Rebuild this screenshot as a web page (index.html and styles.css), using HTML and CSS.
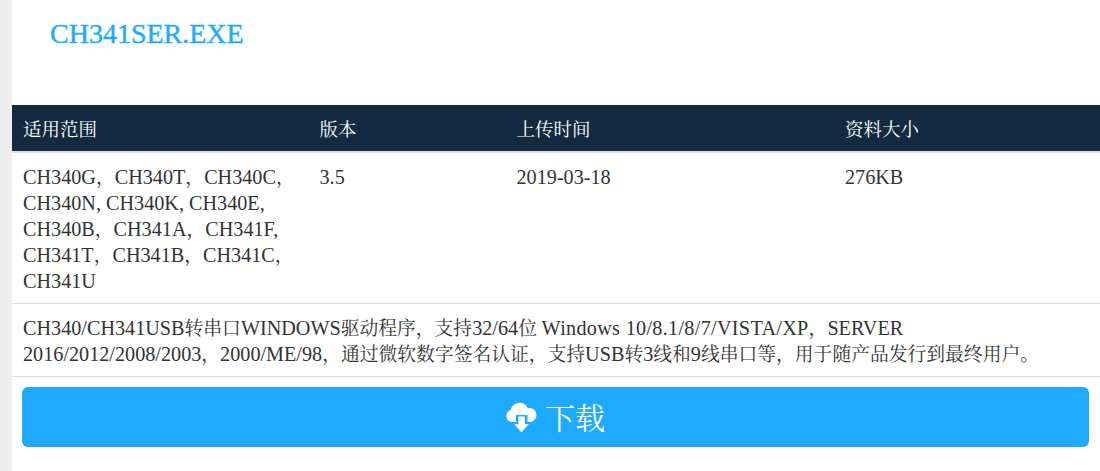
FILE: index.html
```html
<!DOCTYPE html>
<html lang="zh-CN">
<head>
  <meta charset="UTF-8" />
  <meta name="viewport" content="width=device-width, initial-scale=1.0" />
  <title>CH341SER.EXE</title>
  <link rel="stylesheet" href="styles.css">
</head>
<body>
  <div class="panel">
    <h2 class="file-name">CH341SER.EXE</h2>
    <table class="file-table">
      <colgroup>
        <col class="col-scope">
        <col class="col-version">
        <col class="col-date">
        <col class="col-size">
      </colgroup>
      <thead>
        <tr>
          <th>适用范围</th>
          <th>版本</th>
          <th>上传时间</th>
          <th>资料大小</th>
        </tr>
      </thead>
      <tbody>
        <tr>
          <td><span class="lat">CH340G</span>，<span class="lat">CH340T</span>，<span class="lat">CH340C</span>，<span class="lat">CH340N, CH340K, CH340E, CH340B</span>，<span class="lat">CH341A</span>，<span class="lat">CH341F, CH341T</span>，<span class="lat">CH341B</span>，<span class="lat">CH341C</span>，<span class="lat">CH341U</span></td>
          <td><span class="lat">3.5</span></td>
          <td><span class="lat">2019-03-18</span></td>
          <td><span class="lat">276KB</span></td>
        </tr>
        <tr>
          <td colspan="4"><span class="lat">CH340/CH341USB</span>转串口<span class="lat">WINDOWS</span>驱动程序，支持<span class="lat">32/64</span>位 <span class="lat os-list">Windows 10/8.1/8/7/VISTA/XP</span>，<span class="lat">SERVER</span><br><span class="lat">2016/2012/2008/2003</span>，<span class="lat">2000/ME/98</span>，通过微软数字签名认证，支持<span class="lat">USB</span>转<span class="lat">3</span>线和<span class="lat">9</span>线串口等，用于随产品发行到最终用户。</td>
        </tr>
      </tbody>
    </table>
    <div class="download-row">
      <a class="download-btn" href="#">
        <svg class="cloud-icon" viewBox="0 0 32 31" aria-hidden="true">
          <path fill="#fff" d="M6 20A6 6 0 0 1 4.600 8.300 9 9 0 0 1 21.700 6.200 7 7 0 0 1 25 20h-3.500v-7H10v7z"/>
          <path fill="#fff" d="M12.300 14.500h6.500V22h4l-7.300 8.500L8.300 22h4z"/>
        </svg>
        <span class="download-text">下载</span>
      </a>
    </div>
  </div>
</body>
</html>
```

FILE: styles.css
```css
html, body { height: 100%; }
body { margin: 0; padding-left: 12px; background-color: #eee; font-family: "Liberation Serif", "Noto Serif CJK SC", "Noto Sans CJK SC", serif; font-size: 18.8px; line-height: 26px; color: #333; overflow: hidden; }
.lat { font-size: 20.2px; line-height: 20px; }
.os-list { letter-spacing: 0.3px; }
.panel { background-color: #fff; height: 100%; }
.file-name { margin: 0; padding: 18px 38px 0; height: 105px; font-size: 28px; line-height: 32px; font-weight: 400; color: #1eaaff; box-sizing: border-box; -webkit-text-stroke: 0.4px #1eaaff; }
.file-table { width: 100%; table-layout: fixed; border-collapse: collapse; }
.col-scope { width: 296.5px; }
.col-version { width: 197px; }
.col-date { width: 328.5px; }
.file-table th { background-color: #132a40; color: #fff; font-size: 18.5px; font-weight: 400; text-align: left; padding: 12px 11px 8px; border-bottom: 2px solid #dee2e6; }
.file-table td { padding: 12px 11px 8px; vertical-align: top; border-bottom: 1px solid #dcdcdc; }
.download-row { padding: 10px 11px 0 10px; }
.download-btn { display: flex; align-items: center; justify-content: center; gap: 7px; height: 60px; background-color: #1eaaff; border-radius: 6px; color: #fff; font-size: 30px; text-decoration: none; }
.download-text { padding-top: 3px; }
.cloud-icon { width: 32px; height: 31px; }
```
